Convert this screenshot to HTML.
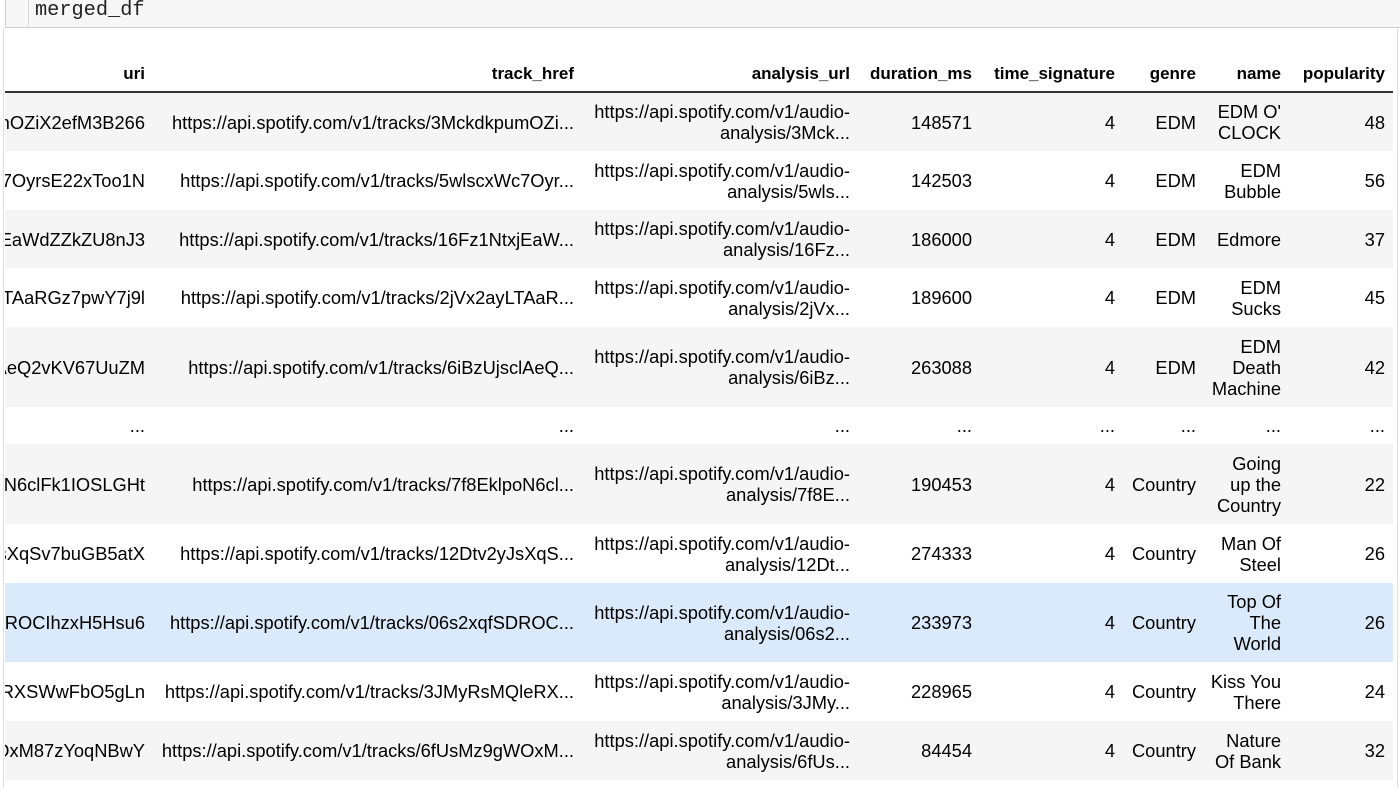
<!DOCTYPE html>
<html><head><meta charset="utf-8"><style>
body{margin:0;width:1400px;height:783px;overflow:hidden;background:#fff;position:relative;font-family:"Liberation Sans",Arial,sans-serif;font-size:18.3px;color:#000}
.inp{position:absolute;left:5px;top:-2px;width:1400px;height:30px;background:#f7f7f7;border:1px solid #cfcfcf;box-sizing:border-box}
.gut{position:absolute;left:22px;top:0;width:1px;height:28px;background:#dcdcdc}
.code{position:absolute;left:35px;top:-1px;font-family:"Liberation Mono",monospace;font-size:20.3px;line-height:24px;color:#222}
.lline{position:absolute;left:3px;top:28px;width:1px;height:760px;background:#dedede}
.rline{position:absolute;left:1397px;top:28px;width:1px;height:760px;background:#dedede}
.wrap{position:absolute;left:5px;top:55px;width:1388px;height:730px;overflow:hidden}
table{position:absolute;left:-255px;top:0;border-collapse:collapse;table-layout:fixed;width:1643px}
td,th{text-align:right;padding:0 8px 0 0;white-space:nowrap;line-height:21px;vertical-align:middle}
th{font-weight:bold;font-size:17px;height:36px;border-bottom:2px solid #333}
tr.g td{background:#f5f5f5}
tr.b td{background:#dbeafb}
</style></head><body>
<div class="inp"><div class="gut"></div></div>
<div class="code">merged_df</div>
<div class="lline"></div><div class="rline"></div>
<div class="wrap"><table>
<colgroup><col style="width:403px"><col style="width:429px"><col style="width:276px"><col style="width:122px"><col style="width:143px"><col style="width:81px"><col style="width:85px"><col style="width:104px"></colgroup>
<tr><th>uri</th><th>track_href</th><th>analysis_url</th><th>duration_ms</th><th>time_signature</th><th>genre</th><th>name</th><th>popularity</th></tr>
<tr class="g" style="height:59px"><td>spotify:track:3MckdkpumOZiX2efM3B266</td><td>https://api.spotify.com/v1/tracks/3MckdkpumOZi...</td><td>https://api.spotify.com/v1/audio-<br>analysis/3Mck...</td><td>148571</td><td>4</td><td>EDM</td><td>EDM O'<br>CLOCK</td><td>48</td></tr>
<tr style="height:59px"><td>spotify:track:5wlscxWc7OyrsE22xToo1N</td><td>https://api.spotify.com/v1/tracks/5wlscxWc7Oyr...</td><td>https://api.spotify.com/v1/audio-<br>analysis/5wls...</td><td>142503</td><td>4</td><td>EDM</td><td>EDM<br>Bubble</td><td>56</td></tr>
<tr class="g" style="height:58px"><td>spotify:track:16Fz1NtxjEaWdZZkZU8nJ3</td><td>https://api.spotify.com/v1/tracks/16Fz1NtxjEaW...</td><td>https://api.spotify.com/v1/audio-<br>analysis/16Fz...</td><td>186000</td><td>4</td><td>EDM</td><td>Edmore</td><td>37</td></tr>
<tr style="height:59px"><td>spotify:track:2jVx2ayLTAaRGz7pwY7j9l</td><td>https://api.spotify.com/v1/tracks/2jVx2ayLTAaR...</td><td>https://api.spotify.com/v1/audio-<br>analysis/2jVx...</td><td>189600</td><td>4</td><td>EDM</td><td>EDM<br>Sucks</td><td>45</td></tr>
<tr class="g" style="height:80px"><td>spotify:track:6iBzUjsclAeQ2vKV67UuZM</td><td>https://api.spotify.com/v1/tracks/6iBzUjsclAeQ...</td><td>https://api.spotify.com/v1/audio-<br>analysis/6iBz...</td><td>263088</td><td>4</td><td>EDM</td><td>EDM<br>Death<br>Machine</td><td>42</td></tr>
<tr style="height:37px"><td>...</td><td>...</td><td>...</td><td>...</td><td>...</td><td>...</td><td>...</td><td>...</td></tr>
<tr class="g" style="height:80px"><td>spotify:track:7f8EklpoN6clFk1IOSLGHt</td><td>https://api.spotify.com/v1/tracks/7f8EklpoN6cl...</td><td>https://api.spotify.com/v1/audio-<br>analysis/7f8E...</td><td>190453</td><td>4</td><td>Country</td><td>Going<br>up the<br>Country</td><td>22</td></tr>
<tr style="height:59px"><td>spotify:track:12Dtv2yJsXqSv7buGB5atX</td><td>https://api.spotify.com/v1/tracks/12Dtv2yJsXqS...</td><td>https://api.spotify.com/v1/audio-<br>analysis/12Dt...</td><td>274333</td><td>4</td><td>Country</td><td>Man Of<br>Steel</td><td>26</td></tr>
<tr class="b" style="height:79px"><td>spotify:track:06s2xqfSDROCIhzxH5Hsu6</td><td>https://api.spotify.com/v1/tracks/06s2xqfSDROC...</td><td>https://api.spotify.com/v1/audio-<br>analysis/06s2...</td><td>233973</td><td>4</td><td>Country</td><td>Top Of<br>The<br>World</td><td>26</td></tr>
<tr style="height:59px"><td>spotify:track:3JMyRsMQleRXSWwFbO5gLn</td><td>https://api.spotify.com/v1/tracks/3JMyRsMQleRX...</td><td>https://api.spotify.com/v1/audio-<br>analysis/3JMy...</td><td>228965</td><td>4</td><td>Country</td><td>Kiss You<br>There</td><td>24</td></tr>
<tr class="g" style="height:59px"><td>spotify:track:6fUsMz9gWOxM87zYoqNBwY</td><td>https://api.spotify.com/v1/tracks/6fUsMz9gWOxM...</td><td>https://api.spotify.com/v1/audio-<br>analysis/6fUs...</td><td>84454</td><td>4</td><td>Country</td><td>Nature<br>Of Bank</td><td>32</td></tr>
</table></div>
</body></html>
